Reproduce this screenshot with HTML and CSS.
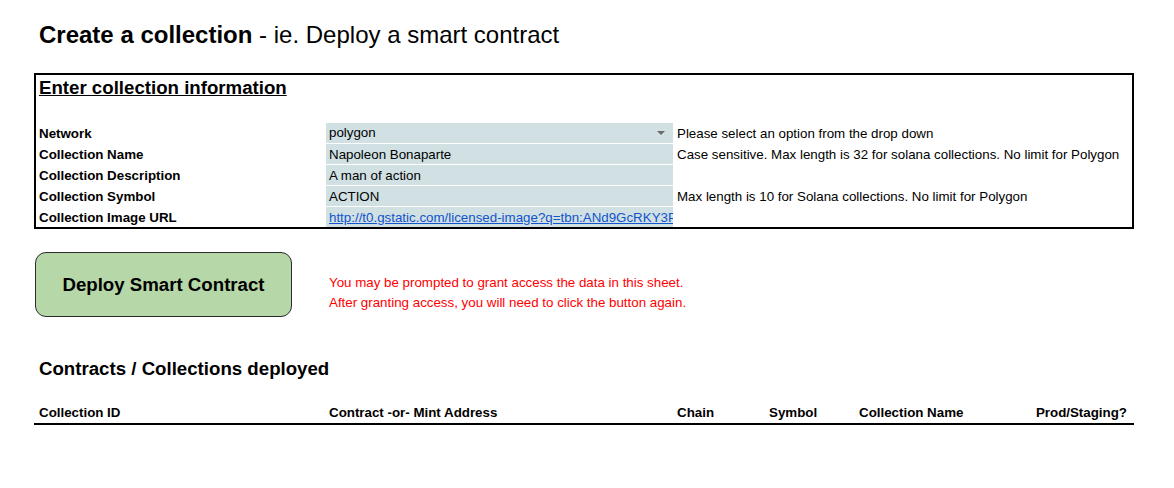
FILE: index.html
```html
<!DOCTYPE html>
<html>
<head>
<meta charset="utf-8">
<link rel="stylesheet" href="styles.css">
</head>
<body>
<div class="page">
  <h1 class="title"><b>Create a collection</b> - ie. Deploy a smart contract</h1>

  <section class="box">
    <h2 class="box-title">Enter collection information</h2>
    <div class="form-grid">
      <div class="label">Network</div>
      <div class="value select"><span>polygon</span><span class="caret"></span></div>
      <div class="note">Please select an option from the drop down</div>

      <div class="label">Collection Name</div>
      <div class="value">Napoleon Bonaparte</div>
      <div class="note">Case sensitive. Max length is 32 for solana collections. No limit for Polygon</div>

      <div class="label">Collection Description</div>
      <div class="value">A man of action</div>
      <div class="note"></div>

      <div class="label">Collection Symbol</div>
      <div class="value">ACTION</div>
      <div class="note">Max length is 10 for Solana collections. No limit for Polygon</div>

      <div class="label">Collection Image URL</div>
      <div class="value"><a class="link" href="#">http://t0.gstatic.com/licensed-image?q=tbn:ANd9GcRKY3P</a></div>
      <div class="note"></div>
    </div>
  </section>

  <div class="action-row">
    <button class="deploy">Deploy Smart Contract</button>
    <div class="warning">
      <div>You may be prompted to grant access the data in this sheet.</div>
      <div>After granting access, you will need to click the button again.</div>
    </div>
  </div>

  <h2 class="section-title">Contracts / Collections deployed</h2>
  <div class="table-head">
    <div class="th">Collection ID</div>
    <div class="th">Contract -or- Mint Address</div>
    <div class="th">Chain</div>
    <div class="th">Symbol</div>
    <div class="th">Collection Name</div>
    <div class="th right">Prod/Staging?</div>
  </div>
</div>
</body>
</html>
```

FILE: styles.css
```css
* { box-sizing: border-box; }
html, body { margin: 0; padding: 0; background: #fff; }
body {
  font-family: "Liberation Sans", Arial, sans-serif;
  color: #000;
  font-size: 13.33px;
}
.page {
  padding: 21px 40px 40px 34px;
}
.title {
  margin: 0;
  padding-left: 5px;
  font-size: 24px;
  line-height: 28px;
  font-weight: normal;
}
.title b { font-weight: bold; }

.box {
  margin-top: 24px;
  width: 1100px;
  border: 2px solid #000;
  padding: 2px 0 0 0;
}
.box-title {
  margin: 0;
  padding-left: 3px;
  font-size: 18.67px;
  line-height: 22px;
  font-weight: bold;
  text-decoration: underline;
}
.form-grid {
  margin-top: 24px;
  display: grid;
  grid-template-columns: 290px 347px 1fr;
  grid-auto-rows: 20px;
  row-gap: 1px;
}
.label {
  padding-left: 3px;
  font-weight: bold;
  line-height: 22px;
  white-space: nowrap;
}
.value {
  background: #d0e0e3;
  padding-left: 3px;
  line-height: 22px;
  white-space: nowrap;
  overflow: hidden;
}
.select {
  display: flex;
  justify-content: space-between;
  align-items: center;
  padding-right: 8px;
}
.select span:first-child { line-height: 22px; }
.caret {
  width: 0;
  height: 0;
  border-left: 4px solid transparent;
  border-right: 4px solid transparent;
  border-top: 4px solid #6b6b6b;
}
.note {
  padding-left: 4px;
  line-height: 22px;
  white-space: nowrap;
}
.link {
  color: #1155cc;
  text-decoration: underline;
}

.action-row {
  margin-top: 23px;
  display: flex;
  align-items: flex-start;
}
.deploy {
  margin-left: 1px;
  width: 257px;
  height: 65px;
  background: #b6d7a8;
  border: 1px solid #2b2b2b;
  border-radius: 11px;
  font-family: "Liberation Sans", Arial, sans-serif;
  font-size: 18.67px;
  font-weight: bold;
  color: #000;
  padding: 0;
}
.warning {
  margin-left: 37px;
  margin-top: 21px;
  color: #ff0000;
  line-height: 20px;
}

.section-title {
  margin: 40px 0 0 0;
  padding-left: 5px;
  font-size: 18.67px;
  line-height: 24px;
  font-weight: bold;
}
.table-head {
  margin-top: 21px;
  width: 1100px;
  display: grid;
  grid-template-columns: 292px 347px 92px 90px 1fr 1fr;
  border-bottom: 2px solid #000;
  height: 23px;
}
.th {
  padding-left: 5px;
  font-weight: bold;
  line-height: 21px;
  white-space: nowrap;
}
.th:nth-child(2) { padding-left: 3px; }
.th:nth-child(n+3) { padding-left: 4px; }
.th.right {
  text-align: right;
  padding-right: 7px;
}
```
